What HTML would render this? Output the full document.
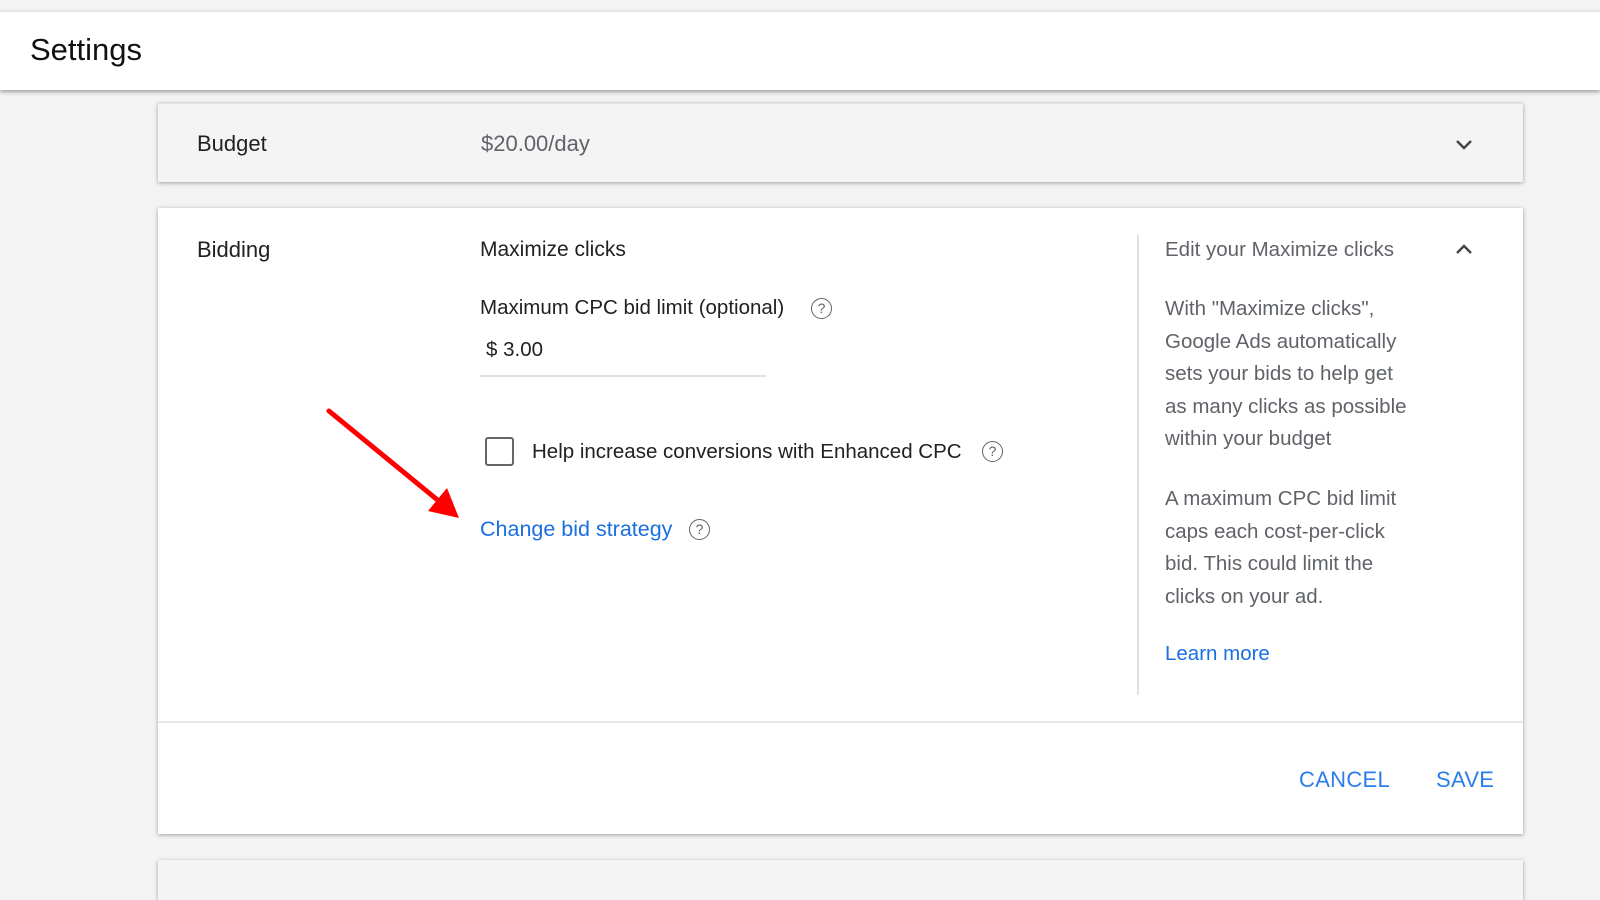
<!DOCTYPE html>
<html><head><meta charset="utf-8"><style>
*{margin:0;padding:0;box-sizing:border-box}
body{width:1600px;height:872px;background:#f3f3f3;font-family:"Liberation Sans",sans-serif;position:relative;overflow:hidden;color:#202124}
.a{position:absolute;white-space:nowrap}
.hdr{position:absolute;left:0;top:11px;width:1600px;height:79px;background:#fff;border-top:1px solid #e0e0e0;box-shadow:0 2px 4px rgba(0,0,0,.35)}
.card{position:absolute;left:158px;width:1365px;box-shadow:0 1px 4px rgba(0,0,0,.35)}
.t{font-size:20.5px;line-height:24px}
.g{color:#5f6368}
.b{color:#1a6fe0}
.q{display:inline-block;width:21px;height:21px;border:1.5px solid #5f6368;border-radius:50%;font-size:14px;line-height:18px;text-align:center;color:#5f6368}
</style></head><body>
<div class="hdr"><div class="a" style="left:30px;top:20px;font-size:31px;color:#111">Settings</div></div>
<div class="card" style="top:103px;height:79px;background:#f4f4f4;border-top:1px solid #e4e4e4">
 <div class="a t" style="left:39px;top:28px;font-size:22px">Budget</div>
 <div class="a t g" style="left:323px;top:28px;font-size:22px">$20.00/day</div>
 <svg class="a" style="left:1295px;top:30px" width="22" height="22" viewBox="0 0 22 22"><path d="M4 7l7 7 7-7" fill="none" stroke="#444" stroke-width="2.4"/></svg>
</div>
<div class="card" style="top:208px;height:626px;background:#fff">
 <div class="a t" style="left:39px;top:30px;font-size:22px">Bidding</div>
 <div class="a t" style="left:322px;top:30px;font-size:21px">Maximize clicks</div>
 <div class="a t" style="left:322px;top:88px">Maximum CPC bid limit (optional)</div>
 <span class="a q" style="left:653px;top:90px">?</span>
 <div class="a t" style="left:328px;top:130px">$ 3.00</div>
 <div class="a" style="left:322px;top:167px;width:286px;height:2px;background:#e0e0e0"></div>
 <div class="a" style="left:327px;top:229px;width:29px;height:29px;border:2.5px solid #666;border-radius:3px"></div>
 <div class="a t" style="left:374px;top:232px">Help increase conversions with Enhanced CPC</div>
 <span class="a q" style="left:824px;top:233px">?</span>
 <div class="a t b" style="left:322px;top:309px;font-size:21.5px">Change bid strategy</div>
 <span class="a q" style="left:531px;top:311px">?</span>
 <div class="a" style="left:979px;top:27px;width:2px;height:460px;background:#e0e0e0"></div>
 <div class="a t g" style="left:1007px;top:30px">Edit your Maximize clicks</div>
 <svg class="a" style="left:1295px;top:30px" width="22" height="22" viewBox="0 0 22 22"><path d="M4 15l7-7 7 7" fill="none" stroke="#444" stroke-width="2.4"/></svg>
 <div class="a g" style="left:1007px;top:85px;font-size:20.5px;line-height:32.6px">With "Maximize clicks",<br>Google Ads automatically<br>sets your bids to help get<br>as many clicks as possible<br>within your budget</div>
 <div class="a g" style="left:1007px;top:275px;font-size:20.5px;line-height:32.6px">A maximum CPC bid limit<br>caps each cost-per-click<br>bid. This could limit the<br>clicks on your ad.</div>
 <div class="a t b" style="left:1007px;top:434px">Learn more</div>
 <div class="a" style="left:0;top:513px;width:1365px;height:2px;background:#e6e6e6"></div>
 <div class="a b" style="left:1141px;top:559px;font-size:22px;letter-spacing:.3px;color:#2b7de9">CANCEL</div>
 <div class="a b" style="left:1278px;top:559px;font-size:22px;letter-spacing:.3px;color:#2b7de9">SAVE</div>
</div>
<div class="card" style="top:860px;height:40px;background:#f4f4f4"></div>
<svg class="a" style="left:0;top:0" width="1600" height="872"><line x1="329" y1="411" x2="440" y2="502" stroke="#f00" stroke-width="5" stroke-linecap="round"/><polygon points="459,518 428,511 447,488" fill="#f00"/></svg>
</body></html>
